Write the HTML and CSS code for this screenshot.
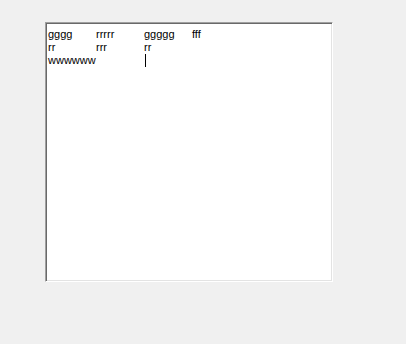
FILE: index.html
```html
<!DOCTYPE html>
<html lang="en">
<head>
    <meta charset="UTF-8">
    <title>Edit</title>
    <link rel="stylesheet" href="styles.css">
</head>
<body>
    <div class="editbox">
        <div class="line"><span class="cell">gggg</span><span class="cell">rrrrr</span><span class="cell">ggggg</span><span class="cell">fff</span></div>
        <div class="line"><span class="cell">rr</span><span class="cell">rrr</span><span class="cell">rr</span></div>
        <div class="line"><span class="cell">wwwwww</span><span class="cell"></span><span class="cell"><span class="caret"></span></span></div>
    </div>
</body>
</html>
```

FILE: styles.css
```css
/* window background */
body {
    margin: 0;
    padding: 22px 0 0 45px;
    background: #f0f0f0;
    font-family: "Liberation Sans", Arial, sans-serif;
    font-size: 11px;
}

/* sunken edit control */
.editbox {
    width: 282px;
    height: 253px;
    padding: 5px 2px 0 2px;
    background: #fff;
    border: 1px solid;
    border-color: #a0a0a0 #fff #fff #a0a0a0;
    box-shadow: inset 1px 1px 0 #696969, inset -1px -1px 0 #e3e3e3;
    color: #000;
}
.line { display: flex; height: 13px; line-height: 13px; white-space: pre; }
.cell { width: 48px; flex: none; position: relative; }
.caret {
    position: absolute;
    left: 1px;
    top: 0;
    width: 1px;
    height: 13px;
    background: #000;
}
```
